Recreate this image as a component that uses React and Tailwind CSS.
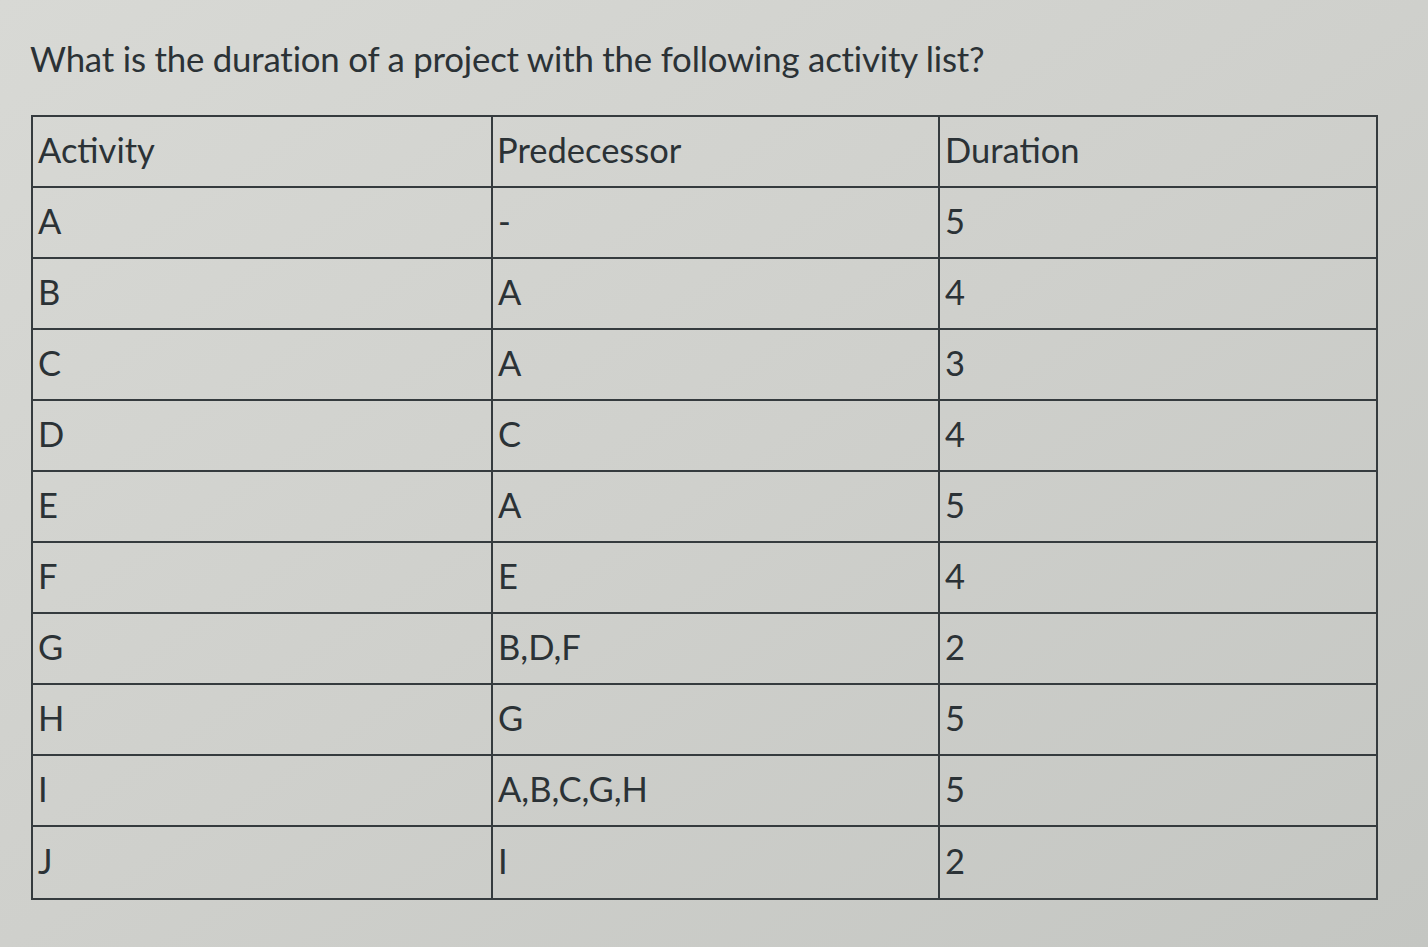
export default function App() {
  const rows = [
    ["A", "-", "5"],
    ["B", "A", "4"],
    ["C", "A", "3"],
    ["D", "C", "4"],
    ["E", "A", "5"],
    ["F", "E", "4"],
    ["G", "B,D,F", "2"],
    ["H", "G", "5"],
    ["I", "A,B,C,G,H", "5"],
    ["J", "I", "2"],
  ];
  const font = { fontFamily: "Lato, 'Open Sans', sans-serif" };
  return (
    <div
      className="w-[1428px] h-[947px] overflow-hidden bg-gradient-to-br from-[#d8d9d5] via-[#cfd0cc] to-[#c4c6c2] text-[#2b3236]"
      style={font}
    >
      <div className="pt-[34px] pl-[30px] text-[34.8px] leading-[50px] tracking-[-0.2px]">
        What is the duration of a project with the following activity list?
      </div>
      <div className="mt-[31px] ml-[31px] w-[1347px] border-2 border-[#353b3e]">
        <div className="grid grid-cols-[460px_447px_1fr] h-[71px] border-b-2 border-[#353b3e] text-[34.5px]">
          <div className="pl-[5px] pb-[4px] flex items-center border-r-2 border-[#353b3e]">Activity</div>
          <div className="pl-[4px] pb-[4px] flex items-center border-r-2 border-[#353b3e]">Predecessor</div>
          <div className="pl-[5px] pb-[4px] flex items-center">Duration</div>
        </div>
        {rows.map((r, i) => (
          <div
            key={i}
            className={`grid grid-cols-[460px_447px_1fr] h-[71px] text-[34.5px] ${i < rows.length - 1 ? "border-b-2 border-[#353b3e]" : ""}`}
          >
            <div className="pl-[5px] pb-[4px] flex items-center border-r-2 border-[#353b3e]">{r[0]}</div>
            <div className="pl-[5px] pb-[4px] flex items-center border-r-2 border-[#353b3e]">{r[1]}</div>
            <div className="pl-[5px] pb-[4px] flex items-center">{r[2]}</div>
          </div>
        ))}
      </div>
    </div>
  );
}
